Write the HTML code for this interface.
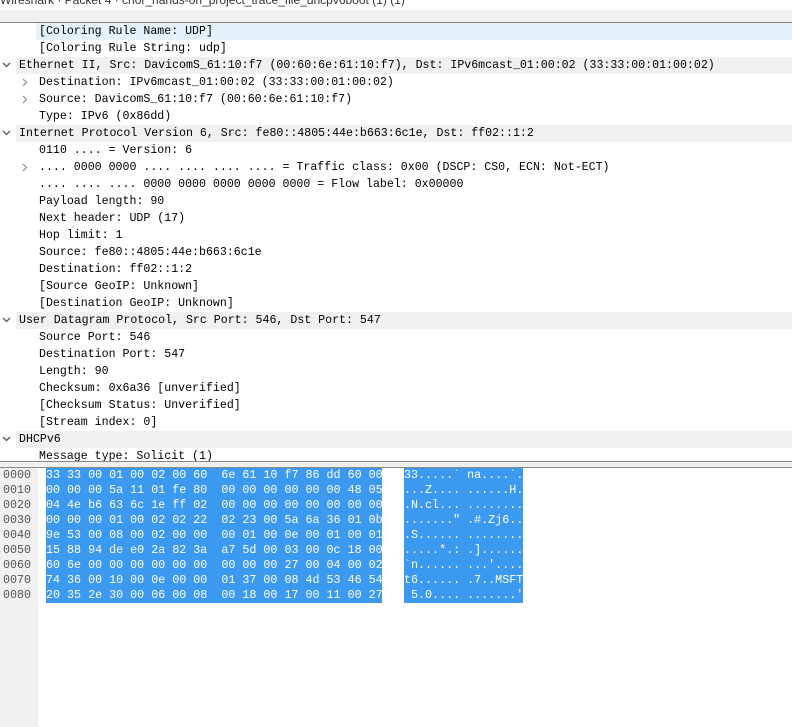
<!DOCTYPE html>
<html><head><meta charset="utf-8"><style>
*{margin:0;padding:0;box-sizing:border-box}
body{width:792px;height:727px;overflow:hidden;background:#fff;position:relative;font-family:"Liberation Mono",monospace;font-size:11.6px;color:#000}
.t{position:absolute;white-space:pre;line-height:17px;height:17px}
.hdr{position:absolute;left:16px;right:0;height:17px;background:#f0f0f0}
.sel{position:absolute;left:36px;right:0;height:17px;background:#e5f1fb}
.chev{position:absolute;width:12px;height:17px}
.hx{position:absolute;white-space:pre;line-height:15px;height:15px;font-size:11.7px}
.off{color:#555}
.hl{background:#3c99f0;color:#fff}
</style></head><body>
<div style="position:absolute;left:0;top:-7px;font-family:'Liberation Sans',sans-serif;font-size:12px;color:#333;white-space:pre">Wireshark · Packet 4 · chor_hands-on_project_trace_file_dhcpv6boot (1) (1)</div>
<div style="position:absolute;left:0;top:10px;width:792px;height:12px;background:#f0f0f0"></div>
<div style="position:absolute;left:0;top:22px;width:792px;height:1px;background:#888"></div>

<div class="sel" style="top:23px"></div>
<div class="hdr" style="top:57px"></div>
<div class="hdr" style="top:125px"></div>
<div class="hdr" style="top:312px"></div>
<div class="hdr" style="top:431px"></div>

<svg style="position:absolute;left:0;top:0" width="40" height="460">
<g fill="none" stroke="#555" stroke-width="1.3">
<path d="M3 63l3.5 3.5 3.5-3.5"/>
<path d="M3 131l3.5 3.5 3.5-3.5"/>
<path d="M3 318l3.5 3.5 3.5-3.5"/>
<path d="M3 437l3.5 3.5 3.5-3.5"/>
</g>
<g fill="none" stroke="#999" stroke-width="1.3">
<path d="M23 79l3.5 3.5-3.5 3.5"/>
<path d="M23 96l3.5 3.5-3.5 3.5"/>
<path d="M23 164l3.5 3.5-3.5 3.5"/>
</g>
</svg>

<div class="t" style="left:39px;top:23px">[Coloring Rule Name: UDP]</div>
<div class="t" style="left:39px;top:40px">[Coloring Rule String: udp]</div>
<div class="t" style="left:19px;top:57px">Ethernet II, Src: DavicomS_61:10:f7 (00:60:6e:61:10:f7), Dst: IPv6mcast_01:00:02 (33:33:00:01:00:02)</div>
<div class="t" style="left:39px;top:74px">Destination: IPv6mcast_01:00:02 (33:33:00:01:00:02)</div>
<div class="t" style="left:39px;top:91px">Source: DavicomS_61:10:f7 (00:60:6e:61:10:f7)</div>
<div class="t" style="left:39px;top:108px">Type: IPv6 (0x86dd)</div>
<div class="t" style="left:19px;top:125px">Internet Protocol Version 6, Src: fe80::4805:44e:b663:6c1e, Dst: ff02::1:2</div>
<div class="t" style="left:39px;top:142px">0110 .... = Version: 6</div>
<div class="t" style="left:39px;top:159px">.... 0000 0000 .... .... .... .... = Traffic class: 0x00 (DSCP: CS0, ECN: Not-ECT)</div>
<div class="t" style="left:39px;top:176px">.... .... .... 0000 0000 0000 0000 0000 = Flow label: 0x00000</div>
<div class="t" style="left:39px;top:193px">Payload length: 90</div>
<div class="t" style="left:39px;top:210px">Next header: UDP (17)</div>
<div class="t" style="left:39px;top:227px">Hop limit: 1</div>
<div class="t" style="left:39px;top:244px">Source: fe80::4805:44e:b663:6c1e</div>
<div class="t" style="left:39px;top:261px">Destination: ff02::1:2</div>
<div class="t" style="left:39px;top:278px">[Source GeoIP: Unknown]</div>
<div class="t" style="left:39px;top:295px">[Destination GeoIP: Unknown]</div>
<div class="t" style="left:19px;top:312px">User Datagram Protocol, Src Port: 546, Dst Port: 547</div>
<div class="t" style="left:39px;top:329px">Source Port: 546</div>
<div class="t" style="left:39px;top:346px">Destination Port: 547</div>
<div class="t" style="left:39px;top:363px">Length: 90</div>
<div class="t" style="left:39px;top:380px">Checksum: 0x6a36 [unverified]</div>
<div class="t" style="left:39px;top:397px">[Checksum Status: Unverified]</div>
<div class="t" style="left:39px;top:414px">[Stream index: 0]</div>
<div class="t" style="left:19px;top:431px">DHCPv6</div>
<div style="position:absolute;left:0;top:448px;width:792px;height:13px;overflow:hidden"><div class="t" style="left:39px;top:0">Message type: Solicit (1)</div></div>

<div style="position:absolute;left:0;top:461px;width:792px;height:7px;background:#f0f0f0;border-top:1px solid #888;border-bottom:1px solid #888"></div>
<div style="position:absolute;left:0;top:468px;width:38px;height:259px;background:#f0f0f0"></div>

<div class="hx off" style="left:3px;top:468px">0000</div>
<div class="hx off" style="left:3px;top:483px">0010</div>
<div class="hx off" style="left:3px;top:498px">0020</div>
<div class="hx off" style="left:3px;top:513px">0030</div>
<div class="hx off" style="left:3px;top:528px">0040</div>
<div class="hx off" style="left:3px;top:543px">0050</div>
<div class="hx off" style="left:3px;top:558px">0060</div>
<div class="hx off" style="left:3px;top:573px">0070</div>
<div class="hx off" style="left:3px;top:588px">0080</div>

<div style="position:absolute;left:46px;top:468px;width:336px;height:135px;background:#3c99f0"></div>
<div style="position:absolute;left:404px;top:468px;width:119px;height:135px;background:#3c99f0"></div>

<div class="hx" style="left:46px;top:468px;color:#fff">33 33 00 01 00 02 00 60  6e 61 10 f7 86 dd 60 00</div>
<div class="hx" style="left:46px;top:483px;color:#fff">00 00 00 5a 11 01 fe 80  00 00 00 00 00 00 48 05</div>
<div class="hx" style="left:46px;top:498px;color:#fff">04 4e b6 63 6c 1e ff 02  00 00 00 00 00 00 00 00</div>
<div class="hx" style="left:46px;top:513px;color:#fff">00 00 00 01 00 02 02 22  02 23 00 5a 6a 36 01 0b</div>
<div class="hx" style="left:46px;top:528px;color:#fff">9e 53 00 08 00 02 00 00  00 01 00 0e 00 01 00 01</div>
<div class="hx" style="left:46px;top:543px;color:#fff">15 88 94 de e0 2a 82 3a  a7 5d 00 03 00 0c 18 00</div>
<div class="hx" style="left:46px;top:558px;color:#fff">60 6e 00 00 00 00 00 00  00 00 00 27 00 04 00 02</div>
<div class="hx" style="left:46px;top:573px;color:#fff">74 36 00 10 00 0e 00 00  01 37 00 08 4d 53 46 54</div>
<div class="hx" style="left:46px;top:588px;color:#fff">20 35 2e 30 00 06 00 08  00 18 00 17 00 11 00 27</div>

<div class="hx" style="left:404px;top:468px;color:#fff">33.....` na....`.</div>
<div class="hx" style="left:404px;top:483px;color:#fff">...Z.... ......H.</div>
<div class="hx" style="left:404px;top:498px;color:#fff">.N.cl... ........</div>
<div class="hx" style="left:404px;top:513px;color:#fff">.......&quot; .#.Zj6..</div>
<div class="hx" style="left:404px;top:528px;color:#fff">.S...... ........</div>
<div class="hx" style="left:404px;top:543px;color:#fff">.....*.: .]......</div>
<div class="hx" style="left:404px;top:558px;color:#fff">`n...... ...'....</div>
<div class="hx" style="left:404px;top:573px;color:#fff">t6...... .7..MSFT</div>
<div class="hx" style="left:404px;top:588px;color:#fff"> 5.0.... .......'</div>
</body></html>
